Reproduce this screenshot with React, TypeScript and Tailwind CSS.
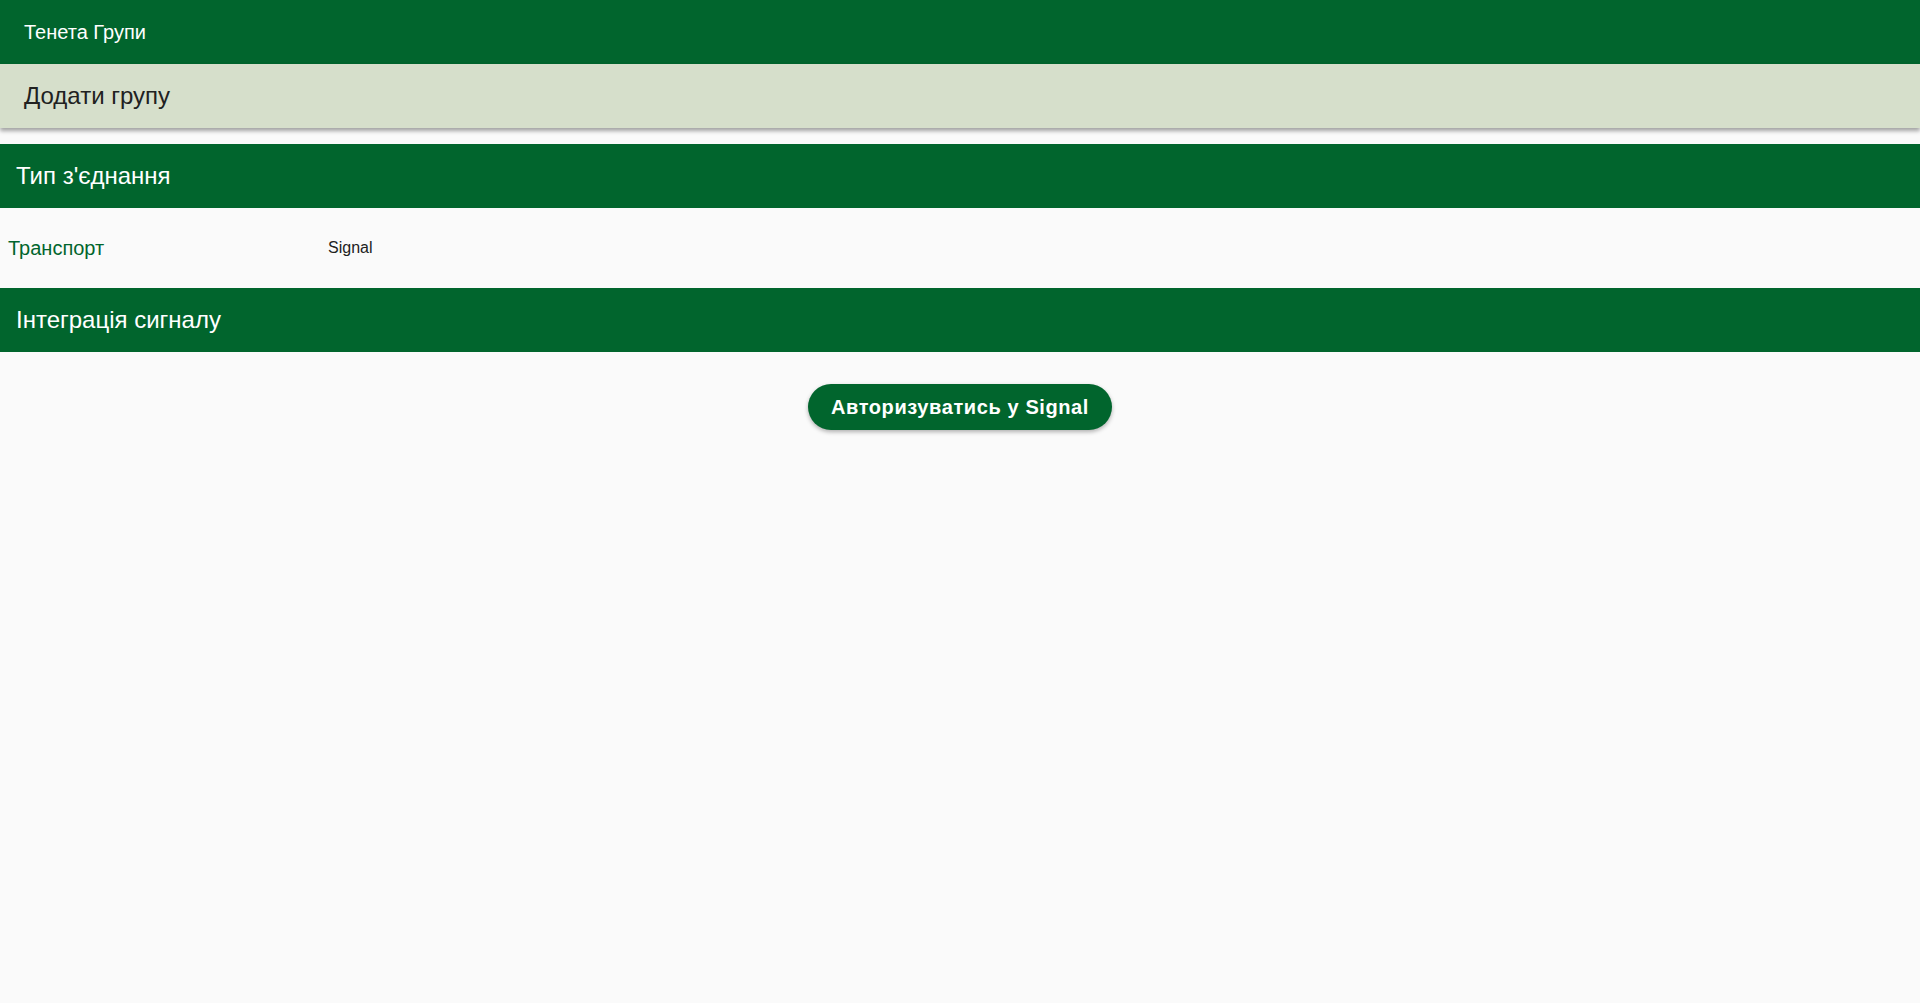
export default function App() {
  return (
    <div className="min-h-[1003px] w-full bg-[#fafafa] font-['Liberation_Sans',Arial,sans-serif]">
      <header className="flex h-16 items-center bg-[#01652d] px-6 text-[20px] text-white">
        Тенета Групи
      </header>
      <div className="flex h-16 items-center bg-[#d6dfcb] px-6 text-[24px] text-[#212121] shadow-[0_3px_4px_rgba(0,0,0,0.35)]">
        Додати групу
      </div>

      <section className="mt-4">
        <h2 className="flex h-16 items-center bg-[#01652d] px-4 text-[24px] text-white">
          Тип з&apos;єднання
        </h2>
        <div className="flex h-20 items-center">
          <span className="w-[328px] pl-2 text-[20px] text-[#01652d]">Транспорт</span>
          <span className="text-[16px] text-[#212121]">Signal</span>
        </div>
      </section>

      <section>
        <h2 className="flex h-16 items-center bg-[#01652d] px-4 text-[24px] text-white">
          Інтеграція сигналу
        </h2>
        <div className="flex justify-center pt-8">
          <button className="h-[46px] w-[304px] rounded-full bg-[#01652d] text-[20px] font-bold tracking-[0.03em] text-white shadow-[0_2px_4px_rgba(0,0,0,0.3)]">
            Авторизуватись у Signal
          </button>
        </div>
      </section>
    </div>
  );
}
